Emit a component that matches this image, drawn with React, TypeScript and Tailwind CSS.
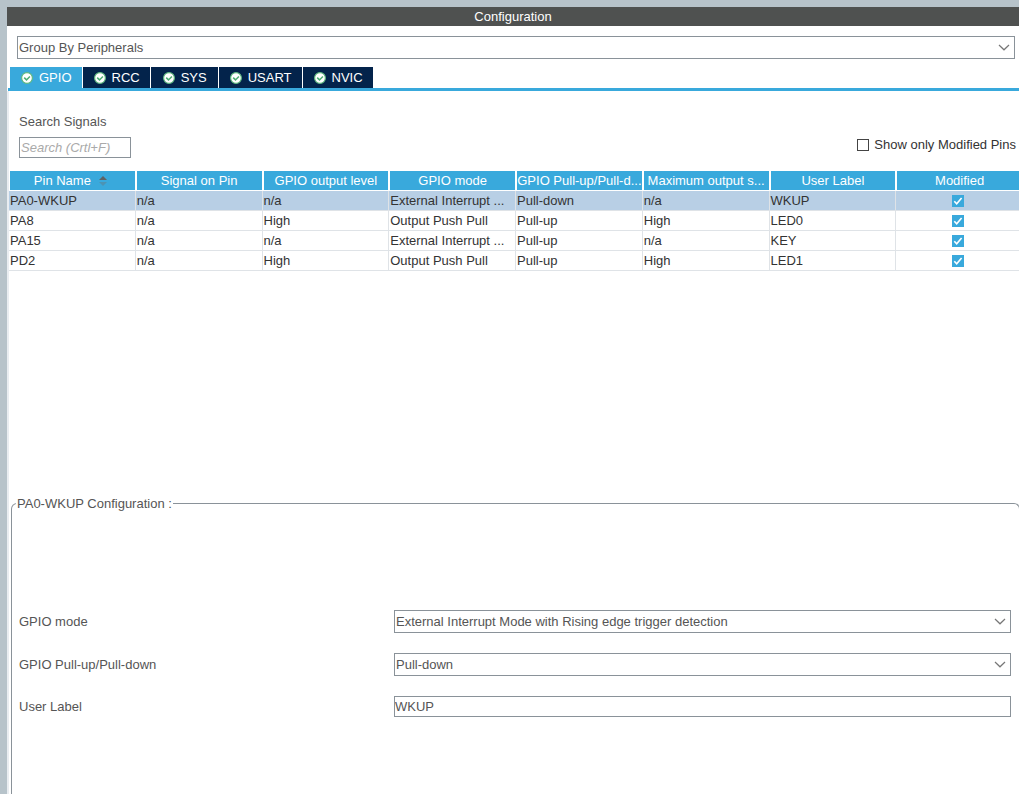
import { useState } from 'react';
import type { ReactNode, SelectHTMLAttributes } from 'react';

interface Pin {
  name: string;
  signal: string;
  level: string;
  mode: string;
  pull: string;
  speed: string;
  label: string;
  modified: boolean;
}

const TABS = ['GPIO', 'RCC', 'SYS', 'USART', 'NVIC'];

const COLUMNS = [
  'Pin Name',
  'Signal on Pin',
  'GPIO output level',
  'GPIO mode',
  'GPIO Pull-up/Pull-d...',
  'Maximum output s...',
  'User Label',
  'Modified',
];

const EXTI_MODE = 'External Interrupt Mode with Rising edge trigger detection';

// Short forms for values that do not fit a table cell
const SHORT: Record<string, string> = {
  [EXTI_MODE]: 'External Interrupt ...',
};

const PINS: Pin[] = [
  { name: 'PA0-WKUP', signal: 'n/a', level: 'n/a', mode: EXTI_MODE, pull: 'Pull-down', speed: 'n/a', label: 'WKUP', modified: true },
  { name: 'PA8', signal: 'n/a', level: 'High', mode: 'Output Push Pull', pull: 'Pull-up', speed: 'High', label: 'LED0', modified: true },
  { name: 'PA15', signal: 'n/a', level: 'n/a', mode: EXTI_MODE, pull: 'Pull-up', speed: 'n/a', label: 'KEY', modified: true },
  { name: 'PD2', signal: 'n/a', level: 'High', mode: 'Output Push Pull', pull: 'Pull-up', speed: 'High', label: 'LED1', modified: true },
];

function CheckBadge() {
  return (
    <svg className="size-3 shrink-0" viewBox="0 0 12 12" aria-hidden="true">
      <circle cx="6" cy="6" r="5.4" fill="#fff" stroke="#5fb87f" strokeWidth="1.2" />
      <path d="M3.2 5.6 5.5 7.9 8.9 4.4" fill="none" stroke="#4fae74" strokeWidth="1.5" />
    </svg>
  );
}

function SortArrows() {
  return (
    <svg className="h-3 w-2 shrink-0" viewBox="0 0 8 12" aria-hidden="true">
      <path d="M0 5 4 1 8 5Z" fill="#5d6366" />
      <path d="M0 7 4 11 8 7Z" fill="#4d93b3" />
    </svg>
  );
}

function Combo({ children, ...props }: SelectHTMLAttributes<HTMLSelectElement> & { children: ReactNode }) {
  return (
    <div className="relative">
      <select
        {...props}
        className="block h-[23px] w-full appearance-none border border-[#8a9299] bg-white pr-6 pl-px text-[#555] outline-none"
      >
        {children}
      </select>
      <svg
        className="pointer-events-none absolute top-2 right-[5px] h-2 w-3"
        viewBox="0 0 12 8"
        fill="none"
        stroke="#777"
        strokeWidth="1.2"
        aria-hidden="true"
      >
        <path d="M1 1 6 5.8 11 1" />
      </svg>
    </div>
  );
}

function Checkbox({ checked, onChange, label }: { checked: boolean; onChange?: () => void; label?: string }) {
  return (
    <span className="relative block size-3 shrink-0">
      <input
        type="checkbox"
        aria-label={label}
        checked={checked}
        onChange={onChange}
        readOnly={!onChange}
        className="block size-3 appearance-none border border-[#444] bg-white checked:border-[#39a9dc] checked:bg-[#39a9dc]"
      />
      {checked && (
        <svg className="pointer-events-none absolute inset-0 size-3" viewBox="0 0 12 12" fill="none" stroke="#fff" strokeWidth="1.6" aria-hidden="true">
          <path d="M2.3 6.2 4.7 8.8 9.6 3" />
        </svg>
      )}
    </span>
  );
}

export default function App() {
  const [tab, setTab] = useState('GPIO');
  const [selected, setSelected] = useState('PA0-WKUP');
  const [onlyModified, setOnlyModified] = useState(false);

  const pins = onlyModified ? PINS.filter(p => p.modified) : PINS;
  const pin = PINS.find(p => p.name === selected) ?? PINS[0];

  return (
    <div className="flex min-h-screen flex-col overflow-hidden bg-[#b7c3ca] pt-[7px] pl-[7px] font-['Liberation_Sans',Arial,sans-serif] text-[13px] leading-5 text-[#555]">
      <h1 className="h-[19px] bg-[#4f5150] text-center text-white">Configuration</h1>

      <main className="flex flex-1 flex-col bg-white">
        <div className="pt-[10px] pr-1 pb-2 pl-[10px]">
          <Combo aria-label="Grouping" defaultValue="Group By Peripherals">
            <option>Group By Peripherals</option>
            <option>Group By IPs</option>
          </Combo>
        </div>

        <div role="tablist" className="ml-px flex gap-px border-b-3 border-[#39a9dc] pl-[2px]">
          {TABS.map(name => (
            <button
              key={name}
              role="tab"
              aria-selected={name === tab}
              onClick={() => setTab(name)}
              className={`flex h-[21px] min-w-[67px] items-center justify-center gap-[6px] pr-[10px] pl-[11px] text-white ${
                name === tab ? 'bg-[#39a9dc]' : 'bg-[#03234b]'
              }`}
            >
              <CheckBadge />
              {name}
            </button>
          ))}
        </div>

        <div className="flex flex-1 flex-col border-l-2 border-[#e9edf1]">
          <div className="flex items-end justify-between pt-[21px] pr-[3px] pb-[13px] pl-[10px]">
            <div>
              <label htmlFor="search" className="block pb-[5px]">Search Signals</label>
              <input
                id="search"
                placeholder="Search (Crtl+F)"
                className="block h-[21px] w-28 border border-[#8a9299] px-px outline-none placeholder:text-[#aaa] placeholder:italic"
              />
            </div>
            <label className="flex items-center gap-[5px] pb-[3px] text-[#333]">
              <Checkbox checked={onlyModified} onChange={() => setOnlyModified(!onlyModified)} />
              Show only Modified Pins
            </label>
          </div>

          <div className="h-[321px] overflow-hidden">
            <table className="w-[calc(100%+4px)] table-fixed border-separate border-spacing-0 text-[#333]">
              <thead>
                <tr>
                  {COLUMNS.map((col, i) => (
                    <th
                      key={col}
                      className="h-5 border-x border-b border-white bg-[#39a9dc] p-0 leading-[19px] font-normal whitespace-nowrap text-white"
                    >
                      {i === 0 ? (
                        <div className="flex items-center justify-center gap-2 pr-1">
                          {col}
                          <SortArrows />
                        </div>
                      ) : (
                        col
                      )}
                    </th>
                  ))}
                </tr>
              </thead>
              <tbody>
                {pins.map(p => (
                  <tr
                    key={p.name}
                    onClick={() => setSelected(p.name)}
                    className={p.name === selected ? 'bg-[#b8cfe5]' : 'bg-white'}
                  >
                    {[p.name, p.signal, p.level, p.mode, p.pull, p.speed, p.label].map((value, i) => (
                      <td
                        key={i}
                        className="h-5 border-r border-b border-[#dfe3e7] p-0 pl-px leading-[19px] whitespace-nowrap"
                      >
                        {SHORT[value] ?? value}
                      </td>
                    ))}
                    <td className="h-5 border-b border-[#dfe3e7] p-0">
                      <div className="flex justify-center pr-1">
                        <Checkbox checked={p.modified} label={`${p.name} modified`} />
                      </div>
                    </td>
                  </tr>
                ))}
              </tbody>
            </table>
          </div>

          <fieldset className="-mr-px ml-[2px] flex-1 rounded-t-md border border-b-0 border-[#8a9299]">
            <legend className="ml-1 px-px pt-[2px]">{pin.name} Configuration :</legend>
            <div className="grid grid-cols-[375px_1fr] items-center gap-y-5 pt-24 pr-2 pb-6 pl-[7px]">
              <label htmlFor="mode">GPIO mode</label>
              <Combo id="mode" key={`${pin.name}-mode`} defaultValue={pin.mode}>
                <option>{EXTI_MODE}</option>
                <option>Output Push Pull</option>
              </Combo>
              <label htmlFor="pull">GPIO Pull-up/Pull-down</label>
              <Combo id="pull" key={`${pin.name}-pull`} defaultValue={pin.pull}>
                <option>Pull-down</option>
                <option>Pull-up</option>
              </Combo>
              <label htmlFor="label">User Label</label>
              <input
                id="label"
                key={`${pin.name}-label`}
                defaultValue={pin.label}
                className="block h-[21px] w-full border border-[#8a9299] outline-none"
              />
            </div>
          </fieldset>
        </div>
      </main>
    </div>
  );
}
